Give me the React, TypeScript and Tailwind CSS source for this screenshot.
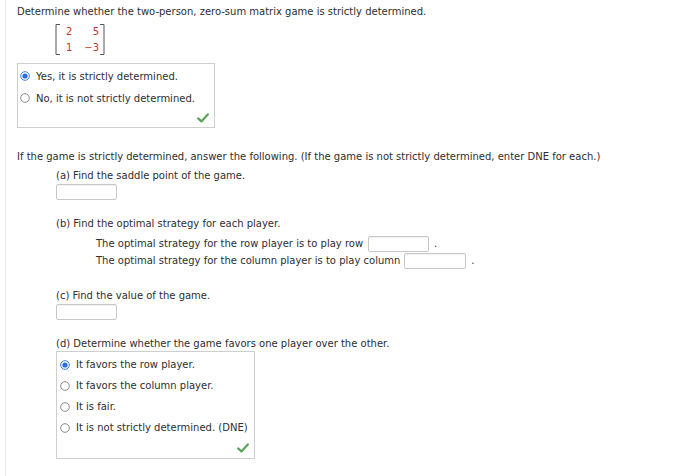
import React from "react";

function Radio({ checked }: { checked?: boolean }) {
  return (
    <svg width="10" height="10" viewBox="0 0 10 10" className="shrink-0">
      <circle cx="5" cy="5" r="4.3" fill="#fff" stroke={checked ? "#3d7fd9" : "#8c8c8c"} strokeWidth="1" />
      {checked && <circle cx="5" cy="5" r="2.6" fill="#2a6ed6" />}
    </svg>
  );
}

function Check() {
  return (
    <svg width="12" height="10" viewBox="0 0 12 10">
      <path d="M1.2 5.4 L4.4 8.4 L10.8 1.4" fill="none" stroke="#5aa458" strokeWidth="2.2" strokeLinecap="round" strokeLinejoin="round" />
    </svg>
  );
}

function Blank({ w = "w-[61px]" }: { w?: string }) {
  return <div className={`${w} h-[16px] border border-[#c8c8c8] rounded-[2px] bg-white shadow-[inset_0_1px_1px_rgba(0,0,0,0.06)]`} />;
}

function Bracket({ side }: { side: "l" | "r" }) {
  const d = side === "l" ? "M5 0.5 H1 V30.5 H5" : "M0 0.5 H4 V30.5 H0";
  return (
    <svg width="5" height="31" viewBox="0 0 5 31">
      <path d={d} fill="none" stroke="#555" strokeWidth="1" />
    </svg>
  );
}

export default function App() {
  return (
    <div className="w-[700px] h-[476px] bg-white overflow-hidden font-['DejaVu_Sans',sans-serif] text-[10px] text-[#2e2e2e]">
      <div className="ml-[5px] h-full border-l border-[#ececec]">
        {/* Question */}
        <div className="pl-[11px] pt-[5px] h-[134px]">
          <p className="leading-[14px]">Determine whether the two-person, zero-sum matrix game is strictly determined.</p>
          <div className="ml-[38px] mt-[5px] flex items-stretch h-[31px]">
            <Bracket side="l" />
            <div className="grid grid-cols-[10px_23px] pl-[6px] pr-[1px] text-[#c0392b] leading-[15.5px]">
              <span>2</span>
              <span className="text-right">5</span>
              <span>1</span>
              <span className="text-right">−3</span>
            </div>
            <Bracket side="r" />
          </div>
          <div className="mt-[8px] w-[198px] h-[65px] border border-[#cfcfcf] pt-[1px]">
            <div className="h-[22px] flex items-center gap-[6px] pl-[2px]">
              <Radio checked />
              <span>Yes, it is strictly determined.</span>
            </div>
            <div className="h-[22px] flex items-center gap-[6px] pl-[2px]">
              <Radio />
              <span>No, it is not strictly determined.</span>
            </div>
            <div className="h-[18px] flex items-center justify-end pr-[5px]">
              <Check />
            </div>
          </div>
        </div>

        {/* Follow-up parts */}
        <div className="pl-[11px] pt-[16px]">
          <p className="leading-[14px]">
            If the game is strictly determined, answer the following. (If the game is not strictly determined, enter DNE for each.)
          </p>
          <div className="ml-[39px]">
            <p className="leading-[14px] mt-[5px]">(a) Find the saddle point of the game.</p>
            <div className="mt-[1px]">
              <Blank />
            </div>

            <p className="leading-[14px] mt-[17px]">(b) Find the optimal strategy for each player.</p>
            <div className="ml-[40px] mt-[4px]">
              <div className="h-[17px] flex items-center">
                <span>The optimal strategy for the row player is to play row</span>
                <div className="ml-[5px]">
                  <Blank w="w-[61px]" />
                </div>
                <span className="ml-[5px]">.</span>
              </div>
              <div className="h-[17px] flex items-center">
                <span>The optimal strategy for the column player is to play column</span>
                <div className="ml-[4px]">
                  <Blank w="w-[62px]" />
                </div>
                <span className="ml-[5px]">.</span>
              </div>
            </div>

            <p className="leading-[14px] mt-[20px]">(c) Find the value of the game.</p>
            <div className="mt-[1px]">
              <Blank />
            </div>

            <p className="leading-[14px] mt-[17px]">(d) Determine whether the game favors one player over the other.</p>
            <div className="w-[199px] h-[108px] border border-[#cfcfcf] pt-[2px]">
              {[
                "It favors the row player.",
                "It favors the column player.",
                "It is fair.",
                "It is not strictly determined. (DNE)",
              ].map((t, i) => (
                <div key={t} className="h-[21px] flex items-center gap-[6px] pl-[3px]">
                  <Radio checked={i === 0} />
                  <span>{t}</span>
                </div>
              ))}
              <div className="h-[20px] flex items-center justify-end pr-[5px]">
                <Check />
              </div>
            </div>
          </div>
        </div>
      </div>
    </div>
  );
}
